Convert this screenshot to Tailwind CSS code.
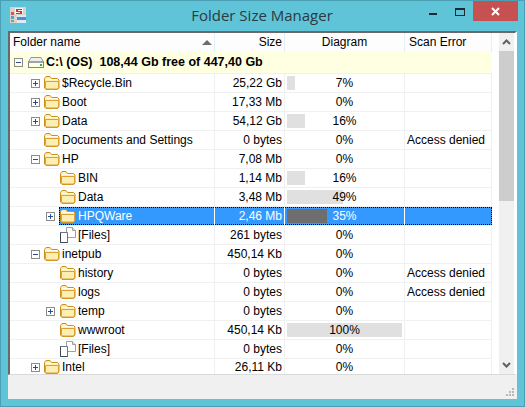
<!DOCTYPE html>
<html lang="en">

<head>
  <meta charset="UTF-8">
  <script src="https://cdn.jsdelivr.net/npm/@tailwindcss/browser@4"></script>
  <title>Folder Size Manager</title>
</head>

<body class="w-[525px] h-[407px] overflow-hidden">
  <!-- shared icons -->
  <svg class="hidden">
    <defs>
      <linearGradient id="fold" x1="0" y1="0" x2="0" y2="1">
        <stop offset="0" stop-color="#fff8cc" />
        <stop offset="1" stop-color="#fbd05a" />
      </linearGradient>
      <linearGradient id="box" x1="0" y1="0" x2="1" y2="1">
        <stop offset="0" stop-color="#ffffff" />
        <stop offset="1" stop-color="#d4d8e0" />
      </linearGradient>
      <linearGradient id="drv" x1="0" y1="0" x2="0" y2="1">
        <stop offset="0" stop-color="#f6f6f6" />
        <stop offset="1" stop-color="#c4c8cc" />
      </linearGradient>
    </defs>
    <symbol id="folder" viewBox="0 0 16 14">
      <path d="M.5 12V2.5l1.5-2h4l1.5 2h6l1.5 1.5V12l-1.5 1.5h-11.5z" fill="#fdeeb4" stroke="#cc8f1c" />
      <path d="M2 3.5h11.5" stroke="#fffdf0" />
      <path d="M1.5 5.5h13v6l-1 1.5h-11l-1-1.5z" fill="url(#fold)" stroke="#dea030" />
    </symbol>
    <symbol id="plus" viewBox="0 0 9 9">
      <rect x=".5" y=".5" width="8" height="8" fill="url(#box)" stroke="#8c8c8c" />
      <path d="M2 4.5h5M4.5 2v5" stroke="#2c4a8c" />
    </symbol>
    <symbol id="minus" viewBox="0 0 9 9">
      <rect x=".5" y=".5" width="8" height="8" fill="url(#box)" stroke="#8c8c8c" />
      <path d="M2 4.5h5" stroke="#2c4a8c" />
    </symbol>
    <symbol id="files" viewBox="0 0 16 16">
      <path d="M6.500 .5h6l3 3v7h-9z" fill="#fff" stroke="#9aa0a8" />
      <path d="M12.500 .5v3h3" fill="#e4e8ec" stroke="#9aa0a8" />
      <path d="M.5 5.500h7v10h-7z" fill="#fff" stroke="#6a7482" />
      <path d="M.5 5.500v10h7" fill="none" stroke="#3c4654" />
    </symbol>
  </svg>

  <div class="flex flex-col h-full bg-[#60c4d8] border border-[#4a9fb2] font-['Liberation_Sans',sans-serif] text-[12px] text-black">
    <!-- title bar -->
    <div class="relative flex h-[30px] shrink-0">
      <svg class="absolute left-[9px] top-[6px] w-[16px] h-[16px]" viewBox="0 0 16 16">
        <rect x="0" y="0" width="16" height="16" fill="#d8d4cc" />
        <rect x="5" y="1" width="8" height="6" fill="#f4f4f4" />
        <path d="M6 2h6v1H8v1h4v3H6V6h4V5H6z" fill="#e03020" />
        <rect x="7" y="8" width="9" height="2" fill="#dfe8f4" />
        <rect x="7" y="10" width="9" height="3" fill="#4a90d8" />
        <rect x="7" y="13" width="9" height="3" fill="#dfe8f4" />
        <rect x="1" y="5" width="3" height="3" fill="#e05050" />
        <rect x="1" y="9" width="3" height="3" fill="#5a9ad8" />
        <rect x="1" y="13" width="3" height="2" fill="#70b060" />
      </svg>
      <div class="w-full text-center text-[15px] leading-[29px] pr-[1px] font-['Open_Sans',sans-serif] text-[#2b3a40]">Folder Size Manager</div>
      <div class="absolute left-[428px] top-[12px] w-[8px] h-[2px] bg-[#1d2a30]"></div>
      <div class="absolute left-[454px] top-[7px] w-[10px] h-[8px] border border-t-2 border-[#1d2a30]"></div>
      <div class="absolute left-[472px] top-0 w-[45px] h-[20px] bg-[#c75050] flex items-center justify-center">
        <svg class="w-[9px] h-[9px]" viewBox="0 0 9 9">
          <path d="M1 1l7 7M8 1L1 8" stroke="#fff" stroke-width="2" />
        </svg>
      </div>
    </div>

    <!-- client area -->
    <div class="flex flex-col ml-[7px] w-[509px] h-[368px] bg-[#f0f0f0]">
      <div class="flex h-[344px] bg-white border-t-2 border-l-2 border-[#696969] border-b border-b-[#d9d9d9] border-r-2 border-r-white">
        <div class="w-[489px] shrink-0 overflow-hidden">
          <!-- header -->
          <div class="flex h-[19px] leading-[19px] bg-[#fdfdfd]">
            <div class="relative w-[205px] pl-[3px] border-r border-[#e3effb]">Folder name
              <div class="absolute right-[2px] top-[7px] w-0 h-0 border-x-[5px] border-x-transparent border-b-[5px] border-b-[#6d6d6d]"></div>
            </div>
            <div class="w-[70px] pr-[2px] text-right border-r border-[#e3effb]">Size</div>
            <div class="w-[120px] text-center border-r border-[#e3effb]">Diagram</div>
            <div class="w-[87px] pl-[4px] border-r border-[#e3effb]">Scan Error</div>
          </div>

          <!-- root row -->
          <div class="flex items-center h-[22px] bg-[#ffffe1] border-b border-[#f0f0f0] w-[482px]">
            <svg class="ml-[4px] w-[9px] h-[9px]"><use href="#minus" /></svg>
            <svg class="ml-[5px] w-[16px] h-[11px]" viewBox="0 0 16 11">
              <path d="M3 .5h10l2.500 4.500H.5z" fill="#eceef0" stroke="#90969c" />
              <rect x=".5" y="5" width="15" height="5.500" fill="url(#drv)" stroke="#80868c" />
              <rect x="12" y="7" width="2" height="2" fill="#38b048" />
            </svg>
            <span class="ml-[2px] text-[12.500px] font-bold whitespace-pre">C:\ (OS)  108,44 Gb free of 447,40 Gb</span>
          </div>

          <!-- rows -->
          <div class="flex h-[19px] leading-[18px] border-b border-[#f0f0f0] w-[482px]">
            <div class="flex items-center w-[205px] border-r border-[#f0f0f0] pl-[21px]">
              <svg class="w-[9px] h-[9px]"><use href="#plus" /></svg>
              <svg class="ml-[4px] w-[16px] h-[14px]"><use href="#folder" /></svg>
              <span class="ml-[2px]">$Recycle.Bin</span>
            </div>
            <div class="w-[70px] pr-[2px] text-right border-r border-[#f0f0f0]">25,22 Gb</div>
            <div class="relative w-[120px] text-center border-r border-[#f0f0f0]">
              <div class="absolute left-[2px] top-[2px] h-[14px] w-[8px] bg-[#e0e0e0]"></div>
              <span class="relative">7%</span>
            </div>
            <div class="w-[87px] pl-[3px] border-r border-[#f0f0f0]"></div>
          </div>
          <div class="flex h-[19px] leading-[18px] border-b border-[#f0f0f0] w-[482px]">
            <div class="flex items-center w-[205px] border-r border-[#f0f0f0] pl-[21px]">
              <svg class="w-[9px] h-[9px]"><use href="#plus" /></svg>
              <svg class="ml-[4px] w-[16px] h-[14px]"><use href="#folder" /></svg>
              <span class="ml-[2px]">Boot</span>
            </div>
            <div class="w-[70px] pr-[2px] text-right border-r border-[#f0f0f0]">17,33 Mb</div>
            <div class="relative w-[120px] text-center border-r border-[#f0f0f0]">0%</div>
            <div class="w-[87px] pl-[3px] border-r border-[#f0f0f0]"></div>
          </div>
          <div class="flex h-[19px] leading-[18px] border-b border-[#f0f0f0] w-[482px]">
            <div class="flex items-center w-[205px] border-r border-[#f0f0f0] pl-[21px]">
              <svg class="w-[9px] h-[9px]"><use href="#plus" /></svg>
              <svg class="ml-[4px] w-[16px] h-[14px]"><use href="#folder" /></svg>
              <span class="ml-[2px]">Data</span>
            </div>
            <div class="w-[70px] pr-[2px] text-right border-r border-[#f0f0f0]">54,12 Gb</div>
            <div class="relative w-[120px] text-center border-r border-[#f0f0f0]">
              <div class="absolute left-[2px] top-[2px] h-[14px] w-[18px] bg-[#e0e0e0]"></div>
              <span class="relative">16%</span>
            </div>
            <div class="w-[87px] pl-[3px] border-r border-[#f0f0f0]"></div>
          </div>
          <div class="flex h-[19px] leading-[18px] border-b border-[#f0f0f0] w-[482px]">
            <div class="flex items-center w-[205px] border-r border-[#f0f0f0] pl-[34px]">
              <svg class="w-[16px] h-[14px]"><use href="#folder" /></svg>
              <span class="ml-[2px]">Documents and Settings</span>
            </div>
            <div class="w-[70px] pr-[2px] text-right border-r border-[#f0f0f0]">0 bytes</div>
            <div class="relative w-[120px] text-center border-r border-[#f0f0f0]">0%</div>
            <div class="w-[87px] pl-[2px] border-r border-[#f0f0f0]">Access denied</div>
          </div>
          <div class="flex h-[19px] leading-[18px] border-b border-[#f0f0f0] w-[482px]">
            <div class="flex items-center w-[205px] border-r border-[#f0f0f0] pl-[21px]">
              <svg class="w-[9px] h-[9px]"><use href="#minus" /></svg>
              <svg class="ml-[4px] w-[16px] h-[14px]"><use href="#folder" /></svg>
              <span class="ml-[2px]">HP</span>
            </div>
            <div class="w-[70px] pr-[2px] text-right border-r border-[#f0f0f0]">7,08 Mb</div>
            <div class="relative w-[120px] text-center border-r border-[#f0f0f0]">0%</div>
            <div class="w-[87px] pl-[3px] border-r border-[#f0f0f0]"></div>
          </div>
          <div class="flex h-[19px] leading-[18px] border-b border-[#f0f0f0] w-[482px]">
            <div class="flex items-center w-[205px] border-r border-[#f0f0f0] pl-[50px]">
              <svg class="w-[16px] h-[14px]"><use href="#folder" /></svg>
              <span class="ml-[2px]">BIN</span>
            </div>
            <div class="w-[70px] pr-[2px] text-right border-r border-[#f0f0f0]">1,14 Mb</div>
            <div class="relative w-[120px] text-center border-r border-[#f0f0f0]">
              <div class="absolute left-[2px] top-[2px] h-[14px] w-[18px] bg-[#e0e0e0]"></div>
              <span class="relative">16%</span>
            </div>
            <div class="w-[87px] pl-[3px] border-r border-[#f0f0f0]"></div>
          </div>
          <div class="flex h-[19px] leading-[18px] border-b border-[#f0f0f0] w-[482px]">
            <div class="flex items-center w-[205px] border-r border-[#f0f0f0] pl-[50px]">
              <svg class="w-[16px] h-[14px]"><use href="#folder" /></svg>
              <span class="ml-[2px]">Data</span>
            </div>
            <div class="w-[70px] pr-[2px] text-right border-r border-[#f0f0f0]">3,48 Mb</div>
            <div class="relative w-[120px] text-center border-r border-[#f0f0f0]">
              <div class="absolute left-[2px] top-[2px] h-[14px] w-[56px] bg-[#e0e0e0]"></div>
              <span class="relative">49%</span>
            </div>
            <div class="w-[87px] pl-[3px] border-r border-[#f0f0f0]"></div>
          </div>
          <!-- selected -->
          <div class="flex h-[19px] leading-[18px] border-b border-[#f0f0f0] w-[482px]">
            <div class="flex items-center w-[49px] bg-white pl-[36px]">
              <svg class="w-[9px] h-[9px]"><use href="#plus" /></svg>
            </div>
            <div class="flex flex-1 h-[18px] bg-[#3399ff] text-white outline-1 outline-dotted outline-offset-[-1px] outline-black">
              <div class="flex items-center w-[156px] border-r border-white pl-[1px]">
                <svg class="w-[16px] h-[14px]"><use href="#folder" /></svg>
                <span class="ml-[2px]">HPQWare</span>
              </div>
              <div class="w-[70px] pr-[2px] text-right border-r border-white">2,46 Mb</div>
              <div class="relative w-[120px] text-center border-r border-white">
                <div class="absolute left-[2px] top-[2px] h-[14px] w-[40px] bg-[#6e6e6e]"></div>
                <span class="relative">35%</span>
              </div>
              <div class="flex-1"></div>
            </div>
          </div>
          <div class="flex h-[19px] leading-[18px] border-b border-[#f0f0f0] w-[482px]">
            <div class="flex items-center w-[205px] border-r border-[#f0f0f0] pl-[50px]">
              <svg class="w-[16px] h-[16px]"><use href="#files" /></svg>
              <span class="ml-[2px]">[Files]</span>
            </div>
            <div class="w-[70px] pr-[2px] text-right border-r border-[#f0f0f0]">261 bytes</div>
            <div class="relative w-[120px] text-center border-r border-[#f0f0f0]">0%</div>
            <div class="w-[87px] pl-[3px] border-r border-[#f0f0f0]"></div>
          </div>
          <div class="flex h-[19px] leading-[18px] border-b border-[#f0f0f0] w-[482px]">
            <div class="flex items-center w-[205px] border-r border-[#f0f0f0] pl-[21px]">
              <svg class="w-[9px] h-[9px]"><use href="#minus" /></svg>
              <svg class="ml-[4px] w-[16px] h-[14px]"><use href="#folder" /></svg>
              <span class="ml-[2px]">inetpub</span>
            </div>
            <div class="w-[70px] pr-[2px] text-right border-r border-[#f0f0f0]">450,14 Kb</div>
            <div class="relative w-[120px] text-center border-r border-[#f0f0f0]">0%</div>
            <div class="w-[87px] pl-[3px] border-r border-[#f0f0f0]"></div>
          </div>
          <div class="flex h-[19px] leading-[18px] border-b border-[#f0f0f0] w-[482px]">
            <div class="flex items-center w-[205px] border-r border-[#f0f0f0] pl-[50px]">
              <svg class="w-[16px] h-[14px]"><use href="#folder" /></svg>
              <span class="ml-[2px]">history</span>
            </div>
            <div class="w-[70px] pr-[2px] text-right border-r border-[#f0f0f0]">0 bytes</div>
            <div class="relative w-[120px] text-center border-r border-[#f0f0f0]">0%</div>
            <div class="w-[87px] pl-[2px] border-r border-[#f0f0f0]">Access denied</div>
          </div>
          <div class="flex h-[19px] leading-[18px] border-b border-[#f0f0f0] w-[482px]">
            <div class="flex items-center w-[205px] border-r border-[#f0f0f0] pl-[50px]">
              <svg class="w-[16px] h-[14px]"><use href="#folder" /></svg>
              <span class="ml-[2px]">logs</span>
            </div>
            <div class="w-[70px] pr-[2px] text-right border-r border-[#f0f0f0]">0 bytes</div>
            <div class="relative w-[120px] text-center border-r border-[#f0f0f0]">0%</div>
            <div class="w-[87px] pl-[2px] border-r border-[#f0f0f0]">Access denied</div>
          </div>
          <div class="flex h-[19px] leading-[18px] border-b border-[#f0f0f0] w-[482px]">
            <div class="flex items-center w-[205px] border-r border-[#f0f0f0] pl-[36px]">
              <svg class="w-[9px] h-[9px]"><use href="#plus" /></svg>
              <svg class="ml-[5px] w-[16px] h-[14px]"><use href="#folder" /></svg>
              <span class="ml-[2px]">temp</span>
            </div>
            <div class="w-[70px] pr-[2px] text-right border-r border-[#f0f0f0]">0 bytes</div>
            <div class="relative w-[120px] text-center border-r border-[#f0f0f0]">0%</div>
            <div class="w-[87px] pl-[3px] border-r border-[#f0f0f0]"></div>
          </div>
          <div class="flex h-[19px] leading-[18px] border-b border-[#f0f0f0] w-[482px]">
            <div class="flex items-center w-[205px] border-r border-[#f0f0f0] pl-[50px]">
              <svg class="w-[16px] h-[14px]"><use href="#folder" /></svg>
              <span class="ml-[2px]">wwwroot</span>
            </div>
            <div class="w-[70px] pr-[2px] text-right border-r border-[#f0f0f0]">450,14 Kb</div>
            <div class="relative w-[120px] text-center border-r border-[#f0f0f0]">
              <div class="absolute left-[2px] top-[2px] h-[14px] w-[115px] bg-[#e0e0e0]"></div>
              <span class="relative">100%</span>
            </div>
            <div class="w-[87px] pl-[3px] border-r border-[#f0f0f0]"></div>
          </div>
          <div class="flex h-[19px] leading-[18px] border-b border-[#f0f0f0] w-[482px]">
            <div class="flex items-center w-[205px] border-r border-[#f0f0f0] pl-[50px]">
              <svg class="w-[16px] h-[16px]"><use href="#files" /></svg>
              <span class="ml-[2px]">[Files]</span>
            </div>
            <div class="w-[70px] pr-[2px] text-right border-r border-[#f0f0f0]">0 bytes</div>
            <div class="relative w-[120px] text-center border-r border-[#f0f0f0]">0%</div>
            <div class="w-[87px] pl-[3px] border-r border-[#f0f0f0]"></div>
          </div>
          <!-- last row is clipped by the list bottom -->
          <div class="flex h-[15px] leading-[15px] pt-[1px] w-[482px]">
            <div class="flex items-center w-[205px] border-r border-[#f0f0f0] pl-[21px]">
              <svg class="w-[9px] h-[9px]"><use href="#plus" /></svg>
              <svg class="ml-[4px] w-[16px] h-[14px]"><use href="#folder" /></svg>
              <span class="ml-[2px]">Intel</span>
            </div>
            <div class="w-[70px] pr-[2px] text-right border-r border-[#f0f0f0]">26,11 Kb</div>
            <div class="relative w-[120px] text-center border-r border-[#f0f0f0]">0%</div>
            <div class="w-[87px] pl-[3px] border-r border-[#f0f0f0]"></div>
          </div>
        </div>

        <!-- scrollbar -->
        <div class="flex flex-col w-[15px] bg-[#f0f0f0]">
          <div class="flex items-center justify-center h-[18px]">
            <svg class="w-[9px] h-[6px]" viewBox="0 0 9 6"><path d="M1 5l3.500-3.500L8 5" fill="none" stroke="#606060" stroke-width="2" /></svg>
          </div>
          <div class="h-[150px] bg-[#cdcdcd]"></div>
          <div class="flex-1"></div>
          <div class="flex items-center justify-center h-[18px]">
            <svg class="w-[9px] h-[6px]" viewBox="0 0 9 6"><path d="M1 1l3.500 3.500L8 1" fill="none" stroke="#606060" stroke-width="2" /></svg>
          </div>
        </div>
      </div>

      <!-- status bar -->
      <div class="flex flex-1 justify-end items-end pr-[2px] pb-[2px]">
        <svg class="w-[9px] h-[9px]" viewBox="0 0 9 9">
          <path d="M6 0h2v2H6zM3 3h2v2H3zM6 3h2v2H6zM0 6h2v2H0zM3 6h2v2H3zM6 6h2v2H6z" fill="#b8b8b8" />
        </svg>
      </div>
    </div>
  </div>
</body>

</html>
